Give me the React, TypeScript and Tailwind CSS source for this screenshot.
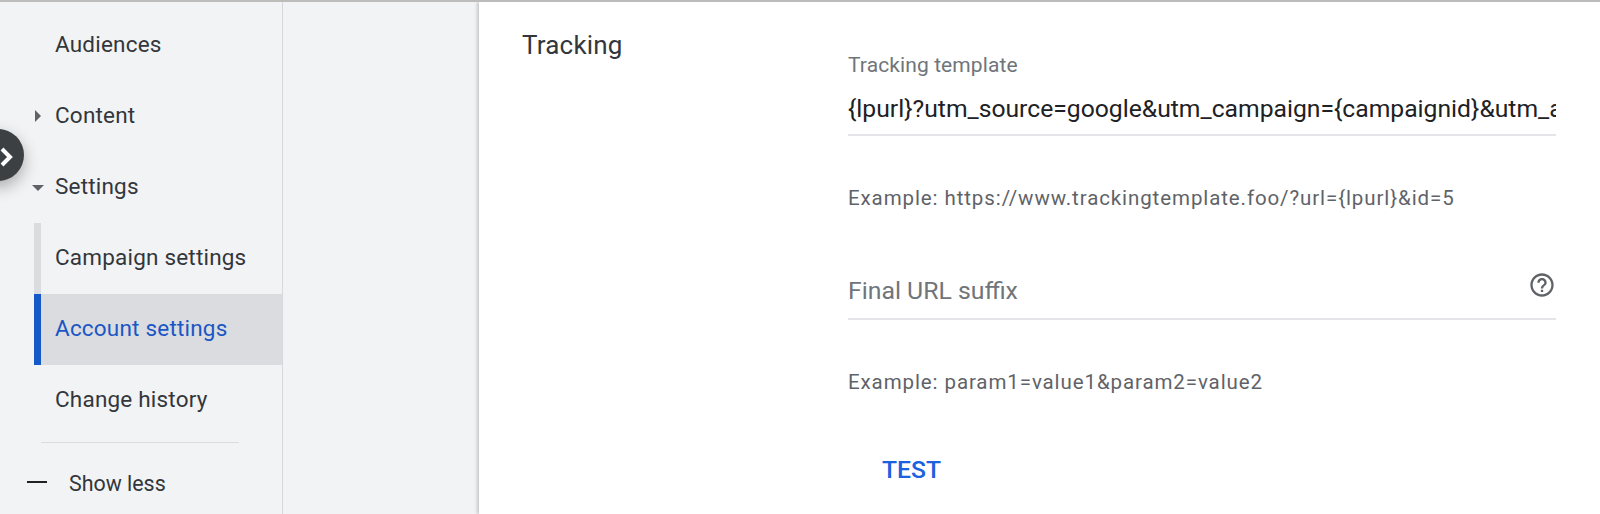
function NavRow({ label, caret }: { label: string; caret?: "right" | "down" }) {
  return (
    <div className="relative flex h-[71px] items-center pl-[55px] text-[22.5px] tracking-[0.2px] text-[#33363b]">
      {caret === "right" && (
        <span className="absolute left-[35px] top-[29.5px] h-0 w-0 border-y-[6px] border-l-[6px] border-y-transparent border-l-[#5f6368]" />
      )}
      {caret === "down" && (
        <span className="absolute left-[32px] top-[33px] h-0 w-0 border-x-[6px] border-t-[6px] border-x-transparent border-t-[#5f6368]" />
      )}
      {label}
    </div>
  );
}

function Sidebar() {
  return (
    <div className="relative flex w-[283px] shrink-0 flex-col border-r border-[#d5d8dc] pt-[7.5px]">
      <NavRow label="Audiences" />
      <NavRow label="Content" caret="right" />
      <NavRow label="Settings" caret="down" />
      <div className="ml-[34px] flex h-[71px] items-center border-l-[7px] border-[#dadce0] pl-[14px] text-[22.5px] tracking-[0.2px] text-[#33363b]">
        Campaign settings
      </div>
      <div className="ml-[34px] flex h-[71px] items-center border-l-[7px] border-[#1558c8] bg-[#dadce0] pl-[14px] text-[22.5px] tracking-[0.2px] text-[#1a56c4]">
        Account settings
      </div>
      <NavRow label="Change history" />
      <div className="ml-[41px] mt-[6.5px] h-px w-[198px] bg-[#dadce0]" />
      <div className="mt-[27px] flex items-center pl-[27px] text-[21.4px] leading-[28px] text-[#33363b]">
        <span className="h-[2px] w-[20px] -translate-y-[2px] bg-[#202124]" />
        <span className="ml-[22px]">Show less</span>
      </div>
      <div className="absolute left-[-28px] top-[127px] flex h-[52px] w-[52px] items-center justify-center rounded-full bg-[#3c4043] shadow-[0_6px_16px_rgba(0,0,0,0.3)]">
        <svg viewBox="0 0 24 24" fill="none" stroke="white" strokeWidth={3} className="ml-[15px] mt-[4px] h-[32px] w-[32px]">
          <path d="m9 18 6-6-6-6" />
        </svg>
      </div>
    </div>
  );
}

function Field() {
  return (
    <div className="flex w-[708px] flex-col pt-[51px]">
      <div className="text-[21px] leading-[24px] tracking-[0.1px] text-[#70757a]">Tracking template</div>
      <div className="mt-[15px] h-[44px] overflow-hidden whitespace-nowrap border-b-2 border-[#e3e5e8] text-[24.7px] leading-[34px] text-[#202124]">
        {"{lpurl}?utm_source=google&utm_campaign={campaignid}&utm_adgroup={adgroupid}"}
      </div>
      <div className="mt-[50px] text-[20.5px] leading-[24px] tracking-[0.9px] text-[#5f6368]">
        {"Example: https://www.trackingtemplate.foo/?url={lpurl}&id=5"}
      </div>
      <div className="mt-[58px] flex h-[52px] items-start justify-between border-b-2 border-[#e3e5e8]">
        <span className="text-[24.8px] leading-[46px] text-[#70757a]">Final URL suffix</span>
        <svg viewBox="0 0 24 24" className="mt-[2.5px] h-[28px] w-[28px] fill-[#5f6368]">
          <path d="M11 18h2v-2h-2v2zm1-16C6.48 2 2 6.48 2 12s4.48 10 10 10 10-4.48 10-10S17.52 2 12 2zm0 18c-4.41 0-8-3.59-8-8s3.59-8 8-8 8 3.59 8 8-3.59 8-8 8zm0-14c-2.21 0-4 1.79-4 4h2c0-1.1.9-2 2-2s2 .9 2 2c0 2-3 1.75-3 5h2c0-2.25 3-2.5 3-5 0-2.21-1.79-4-4-4z" />
        </svg>
      </div>
      <div className="mt-[50px] text-[20.5px] leading-[24px] tracking-[0.9px] text-[#5f6368]">
        {"Example: param1=value1&param2=value2"}
      </div>
      <div className="ml-[34px] mt-[62px] text-[24.7px] font-medium leading-[28px] text-[#1a62e0]">TEST</div>
    </div>
  );
}

export default function App() {
  return (
    <div className="flex h-[514px] w-[1600px] overflow-hidden border-t-2 border-[#bdbcbb] bg-[#f1f3f5] font-['Roboto',sans-serif]">
      <Sidebar />
      <div className="w-[196px] shrink-0" />
      <div className="flex h-full flex-1 bg-white shadow-[-2px_0_3px_rgba(0,0,0,0.18)]">
        <div className="w-[369px] shrink-0 pl-[43px] pt-[26px] text-[26px] leading-[34px] tracking-[0.2px] text-[#33363b]">Tracking</div>
        <Field />
      </div>
    </div>
  );
}
